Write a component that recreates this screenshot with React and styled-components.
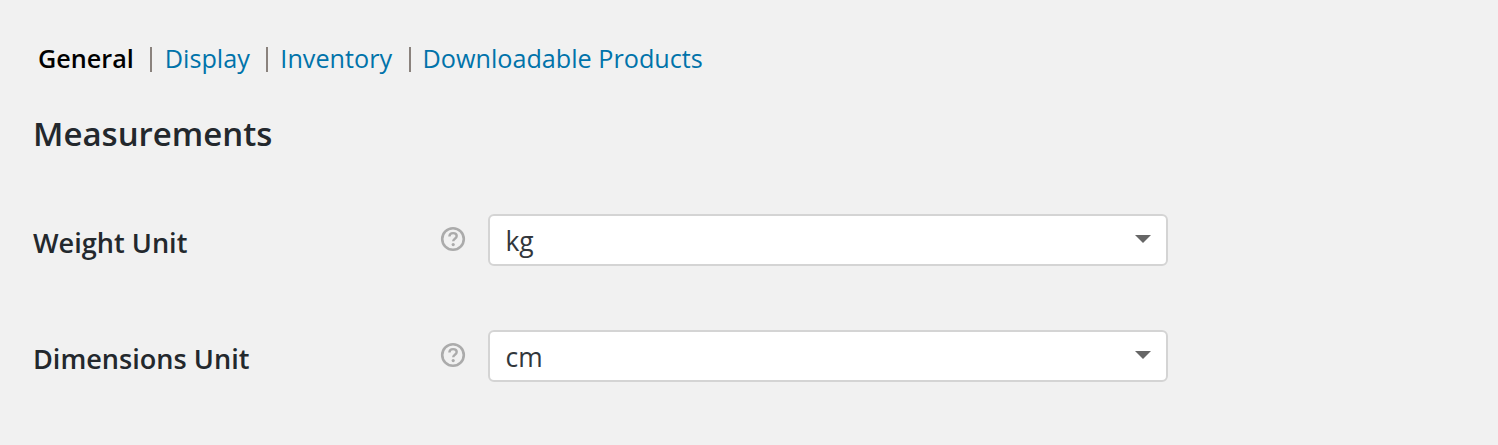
import React from "react";
import styled, { createGlobalStyle } from "styled-components";

const GlobalStyle = createGlobalStyle`
  html, body {
    margin: 0;
    padding: 0;
    background: #f1f1f1;
  }
  body {
    font-family: "Open Sans", "Noto Sans", sans-serif;
    color: #23282d;
  }
`;

const Page = styled.div`
  width: 1498px;
  height: 445px;
  box-sizing: border-box;
  padding: 41px 0 0 33px;
  background: #f1f1f1;
  overflow: hidden;
`;

const SubNav = styled.ul`
  display: flex;
  align-items: center;
  height: 34px;
  margin: 0;
  padding: 0 0 0 5px;
  list-style: none;
  font-size: 25.2px;
  line-height: 34px;
`;

const SubNavItem = styled.li`
  display: flex;
  align-items: center;
`;

const SubNavLink = styled.a`
  color: ${(p) => (p.$current ? "#000" : "#0073aa")};
  font-weight: ${(p) => (p.$current ? 600 : 400)};
  text-decoration: none;
`;

const Divider = styled.span`
  width: 2px;
  height: 25px;
  margin: 2px ${(p) => p.$after}px 0 ${(p) => p.$before}px;
  background: #8a827d;
`;

const Heading = styled.h2`
  margin: 39px 0 0;
  font-size: 33px;
  line-height: 40px;
  font-weight: 600;
  color: #23282d;
`;

const FormTable = styled.div`
  display: flex;
  flex-direction: column;
  gap: 64px;
  margin-top: 60px;
`;

const Row = styled.div`
  display: flex;
  align-items: center;
  height: 52px;
`;

const Label = styled.label`
  width: 407px;
  padding-top: 4px;
  font-size: 27.1px;
  font-weight: 600;
  color: #23282d;
`;

const Help = styled.svg`
  width: 26px;
  height: 26px;
  margin-right: 22px;
  margin-top: -2px;
`;

const Select = styled.div`
  display: flex;
  align-items: center;
  justify-content: space-between;
  box-sizing: border-box;
  width: 680px;
  height: 52px;
  padding: 1px 15px 0 15.5px;
  background: #fff;
  border: 2px solid #d4d4d4;
  border-radius: 6px;
  font-size: 26.4px;
  color: #32373c;
`;

const Caret = styled.span`
  width: 0;
  height: 0;
  border-left: 8px solid transparent;
  border-right: 8px solid transparent;
  border-top: 8px solid #666;
  margin-top: -4px;
`;

const HelpIcon = () => (
  <Help viewBox="0 0 26 26" fill="none">
    <circle cx="13" cy="13" r="10.8" stroke="#ababab" strokeWidth="2.6" />
    <path
      d="M9.4 10.6c0-2.2 1.6-3.5 3.7-3.5s3.6 1.2 3.6 3c0 2.8-3.5 2.6-3.5 5.2"
      stroke="#ababab"
      strokeWidth="2.4"
    />
    <circle cx="13.2" cy="18.6" r="1.6" fill="#ababab" />
  </Help>
);

const tabs = [
  { name: "General", current: true },
  { name: "Display", before: 16, after: 13 },
  { name: "Inventory", before: 16, after: 12.5 },
  { name: "Downloadable Products", before: 16.5, after: 12 },
];

const fields = [
  { label: "Weight Unit", value: "kg" },
  { label: "Dimensions Unit", value: "cm" },
];

export default function App() {
  return (
    <>
      <GlobalStyle />
      <Page>
        <SubNav>
          {tabs.map((tab, index) => (
            <React.Fragment key={tab.name}>
              {index > 0 && <Divider $before={tab.before} $after={tab.after} />}
              <SubNavItem>
                <SubNavLink href="#" $current={tab.current}>
                  {tab.name}
                </SubNavLink>
              </SubNavItem>
            </React.Fragment>
          ))}
        </SubNav>
        <Heading>Measurements</Heading>
        <FormTable>
          {fields.map((field) => (
            <Row key={field.label}>
              <Label>{field.label}</Label>
              <HelpIcon />
              <Select>
                {field.value}
                <Caret />
              </Select>
            </Row>
          ))}
        </FormTable>
      </Page>
    </>
  );
}
